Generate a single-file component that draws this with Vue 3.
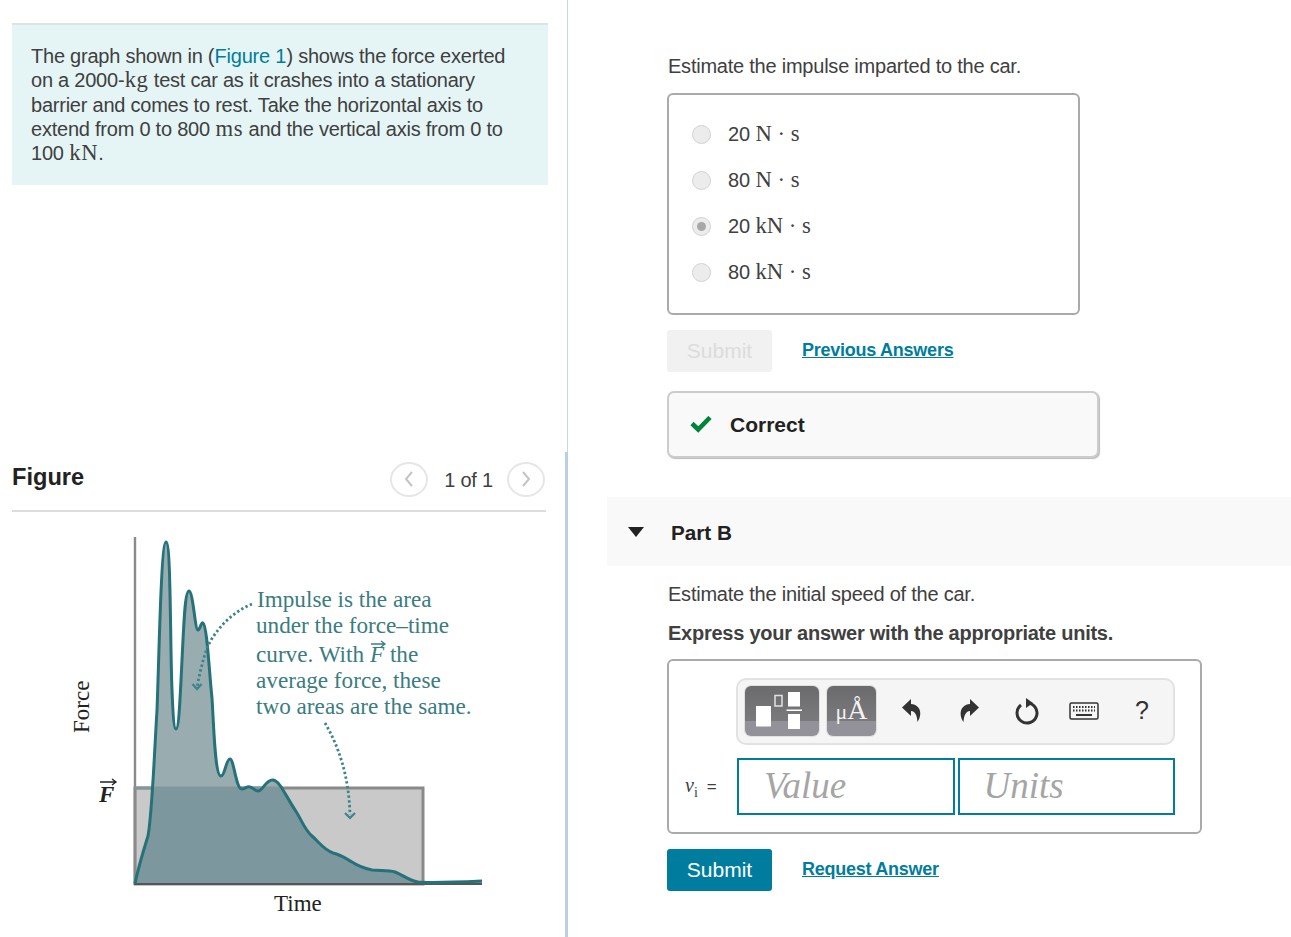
<script setup>
const options = [
  { num: '20', unit: 'N', on: false },
  { num: '80', unit: 'N', on: false },
  { num: '20', unit: 'kN', on: true },
  { num: '80', unit: 'kN', on: false }
]
const curve = 'M135 884 C138 868 143 852 148 836 C152 815 154 760 157 710 C159 660 161 542 166 542 C171 542 170 640 172 690 C173 715 174 729 176 729 C179 729 180 700 182 660 C184 620 185 591 189 591 C193 591 195 630 198 630 C200 630 201 622 203 623 C207 625 209 670 212 698 C214 730 215 776 221 776 C225 776 226 759 230 759 C234 759 236 790 242 789 C245 789 247 786 250 787 C254 788 255 791 258 791 C263 791 266 779 273 780 C280 781 285 795 297 813 C303 823 305 830 312 836 C320 843 323 849 333 853 C341 855 345 858 352 862 C358 866 363 868 372 870 C380 871 388 870 395 872 C403 875 408 880 418 882 C430 883 460 882 482 881'
const curveFill = curve + ' L482 884 Z'
</script>

<template>
  <div class="page">
    <div class="left">
      <section class="intro">
        <div class="problem">
          The graph shown in (<a class="fig-link">Figure 1</a>) shows the force exerted
          on a 2000-<span class="m">kg</span> test car as it crashes into a stationary
          barrier and comes to rest. Take the horizontal axis to
          extend from 0 to 800 <span class="m">ms</span> and the vertical axis from 0 to
          100 <span class="m">kN</span>.
        </div>
      </section>
      <section class="figure">
        <div class="fig-head">
          <h2>Figure</h2>
          <div class="pager">
            <span class="circle">
              <svg width="12" height="20" viewBox="0 0 12 20"><path d="M9 3 3 10l6 7" fill="none" stroke="#c4c4c4" stroke-width="2"/></svg>
            </span>
            <span class="count">1 of 1</span>
            <span class="circle">
              <svg width="12" height="20" viewBox="0 0 12 20"><path d="M3 3l6 7-6 7" fill="none" stroke="#c4c4c4" stroke-width="2"/></svg>
            </span>
          </div>
        </div>
        <svg class="chart" width="562" height="425" viewBox="0 512 562 425">
          <defs>
            <filter id="soft" x="-5%" y="-5%" width="110%" height="110%"><feGaussianBlur stdDeviation="0.45"/></filter>
            <clipPath id="inRect"><rect x="135" y="788" width="288" height="96"/></clipPath>
          </defs>
          <g filter="url(#soft)">
            <rect x="135" y="788" width="288" height="96" fill="#c9c9c9" stroke="#8a8a8a" stroke-width="3"/>
            <path :d="curveFill" fill="#99acb0"/>
            <path :d="curveFill" fill="#7b979e" clip-path="url(#inRect)"/>
            <line x1="135" y1="537" x2="135" y2="884" stroke="#8a8a8a" stroke-width="2.4"/>
            <line x1="135" y1="788" x2="283" y2="788" stroke="#83979b" stroke-width="3"/>
            <line x1="134" y1="884" x2="482" y2="884" stroke="#555" stroke-width="2"/>
            <path :d="curve" fill="none" stroke="#26727a" stroke-width="3"/>
            <path d="M252 604 C232 612 215 630 207 648 C203 660 199 675 197 688" fill="none" stroke="#3d8488" stroke-width="2.8" stroke-dasharray="2.4 2.4"/>
            <path d="M192.500 684l4.500 5 4.500-5" fill="none" stroke="#3d8488" stroke-width="2.2"/>
            <path d="M325 723 C338 745 349 775 350 815" fill="none" stroke="#3d8488" stroke-width="2.8" stroke-dasharray="2.4 2.4"/>
            <path d="M345 813l5 5 5-5" fill="none" stroke="#3d8488" stroke-width="2.2"/>
          </g>
          <g class="note">
            <text x="257" y="607">Impulse is the area</text>
            <text x="256" y="633">under the force–time</text>
            <text x="256" y="662">curve. With <tspan font-style="italic">F</tspan> the</text>
            <text x="256" y="688">average force, these</text>
            <text x="256" y="714">two areas are the same.</text>
          </g>
          <path d="M371 644 H385 M381 641l4 3-4 3" fill="none" stroke="#3d7f83" stroke-width="1.4"/>
          <text class="axis" transform="translate(89 733) rotate(-90)">Force</text>
          <text class="axis vec" x="99" y="802">F</text>
          <path d="M100 782 H116 M112 779l4 3-4 3" fill="none" stroke="#222" stroke-width="1.3"/>
          <text class="axis" x="274" y="911">Time</text>
        </svg>
      </section>
    </div>

    <main class="right">
      <div class="part-a">
        <p class="q first">Estimate the impulse imparted to the car.</p>
        <div class="choices">
          <label v-for="o in options" :key="o.num + o.unit" class="choice">
            <span class="radio" :class="{ on: o.on }"></span>
            <span class="opt">{{ o.num }} <span class="m">{{ o.unit }} · s</span></span>
          </label>
        </div>
        <div class="actions prev">
          <button class="btn off">Submit</button>
          <a class="link">Previous Answers</a>
        </div>
        <div class="correct">
          <svg width="22" height="18" viewBox="0 0 22 18"><path d="M2 7.500 8.200 13.500 20 1.500" fill="none" stroke="#00843c" stroke-width="4.6"/></svg>
          <span>Correct</span>
        </div>
      </div>

      <div class="part-head">
        <span class="tri"></span>
        <span class="part-title">Part B</span>
      </div>

      <div class="part-b">
        <p class="q">Estimate the initial speed of the car.</p>
        <p class="express">Express your answer with the appropriate units.</p>
        <div class="answer">
          <div class="toolbar">
            <div class="tool wide">
              <svg width="74" height="50" viewBox="0 0 74 50">
                <rect x="11" y="20" width="15" height="20.500" fill="#fff"/>
                <rect x="30" y="9.500" width="7" height="10.500" fill="none" stroke="#e2e2e2" stroke-width="1.500"/>
                <rect x="43" y="6" width="12" height="14.500" fill="#fff"/>
                <rect x="41.500" y="23.500" width="15.500" height="1.500" fill="#fff"/>
                <rect x="43" y="28" width="12" height="15" fill="#fff"/>
              </svg>
            </div>
            <div class="tool narrow"><span class="mu"><span class="mu-small">μ</span>Å</span></div>
            <div class="icons">
              <span class="ic"><svg width="22" height="26" viewBox="0 0 22 26"><path d="M10 1 1 9.500 10 18v-5c4 0 6 4 6.500 11 4.500-6 4.500-17-6.500-18Z" fill="#333"/></svg></span>
              <span class="ic"><svg width="22" height="26" viewBox="0 0 22 26"><path d="M12 1l9 8.500L12 18v-5c-4 0-6 4-6.500 11C1 18 1 7 12 6Z" fill="#333"/></svg></span>
              <span class="ic"><svg width="26" height="28" viewBox="0 0 26 28"><path d="M7 8A10 10 0 1 0 13 6" fill="none" stroke="#333" stroke-width="3"/><path d="M12 1l7 5-7 5Z" fill="#333"/></svg></span>
              <span class="ic"><svg width="30" height="18" viewBox="0 0 30 18"><rect x="1" y="1" width="28" height="16" rx="1.500" fill="#f5f5f5" stroke="#333" stroke-width="1.500"/><path d="M4 5h22M4 8.500h22" stroke="#333" stroke-width="2" stroke-dasharray="1.500 1.500"/><path d="M7 13h16" stroke="#333" stroke-width="2"/></svg></span>
              <span class="ic help">?</span>
            </div>
          </div>
          <div class="inputs">
            <span class="label"><i>v</i><sub>i</sub><span class="eq">=</span></span>
            <div class="field">Value</div>
            <div class="field units">Units</div>
          </div>
        </div>
        <div class="actions">
          <button class="btn primary">Submit</button>
          <a class="link">Request Answer</a>
        </div>
      </div>
    </main>
  </div>
</template>

<style>
html, body { margin: 0; background: #fff; }
</style>

<style scoped>
.page {
  display: flex;
  width: 1291px;
  height: 937px;
  overflow: hidden;
  font-family: "Liberation Sans", Arial, sans-serif;
  font-size: 20px;
  letter-spacing: -0.23px;
  color: #404040;
  background: #fff;
}
.left { width: 568px; flex: none; display: flex; flex-direction: column; }
.intro {
  height: 452px;
  box-sizing: border-box;
  padding: 23px 19px 0 12px;
  border-right: 1px solid #c9d6e6;
}
.problem {
  height: 162px;
  box-sizing: border-box;
  padding: 19px 19px 0;
  border-top: 2px solid #dfe3e4;
  background: #e5f5f6;
  line-height: 24.3px;
}
.fig-link { color: #007d9e; margin: 0 0.3px; }
.m { font-family: "Liberation Serif", serif; font-size: 22.700px; line-height: 1; letter-spacing: 0; margin-left: 0.3px; }
.problem .m { letter-spacing: 0.6px; }
.figure { flex: 1; border-right: 3px solid #bccfe1; }
.fig-head {
  display: flex;
  align-items: center;
  justify-content: space-between;
  box-sizing: border-box;
  width: 534px;
  height: 60px;
  margin-left: 12px;
  padding-bottom: 6px;
  border-bottom: 2px solid #ddd;
}
h2 { margin: -2px 0 0; font-size: 23.600px; font-weight: 700; letter-spacing: 0; color: #222; }
.pager { display: flex; align-items: center; margin: 2px 1px 0 0; }
.circle {
  width: 38px;
  height: 35px;
  box-sizing: border-box;
  display: flex;
  align-items: center;
  justify-content: center;
  border: 2px solid #e6e6e6;
  border-radius: 50%;
}
.count { width: 79px; box-sizing: border-box; text-align: center; padding: 3px 0 0 2px; }
.chart { display: block; }
.note text { font-family: "Liberation Serif", serif; font-size: 23.200px; letter-spacing: 0; fill: #3a7c80; }
.axis { font-family: "Liberation Serif", serif; font-size: 23px; letter-spacing: 0; fill: #222; }
.vec { font-style: italic; font-weight: 700; }

.right { flex: 1; min-width: 0; }
.part-a, .part-b { padding-left: 99px; }
.q { margin: 0; height: 24px; line-height: 24px; padding-left: 1px; }
.q.first { padding-top: 54px; }
.choices {
  box-sizing: border-box;
  width: 413px;
  height: 222px;
  margin-top: 15px;
  padding-top: 16px;
  border: 2px solid #aaa;
  border-radius: 6px;
}
.choice { display: flex; align-items: center; height: 46px; padding-left: 23px; }
.radio {
  box-sizing: border-box;
  flex: none;
  width: 19px;
  height: 19px;
  display: flex;
  align-items: center;
  justify-content: center;
  margin-right: 17px;
  border: 1px solid #d2d2d2;
  border-radius: 50%;
  background: #ececec;
}
.radio.on::after { content: ""; width: 9px; height: 9px; border-radius: 50%; background: #a8a8a8; }
.actions { display: flex; align-items: center; gap: 30px; }
.actions.prev { margin-top: 15px; }
.btn {
  width: 105px;
  height: 42px;
  border: 0;
  border-radius: 3px;
  font: 21px "Liberation Sans", Arial, sans-serif;
  padding: 0;
}
.btn.off { background: #f1f1f1; color: #dcdcdc; }
.btn.primary { background: #007d9e; color: #fff; }
.link { font-size: 18px; font-weight: 700; letter-spacing: -0.25px; color: #007d9e; text-decoration: underline; margin-bottom: 2px; }
.correct {
  box-sizing: border-box;
  display: flex;
  align-items: center;
  gap: 18px;
  width: 432px;
  height: 67px;
  margin-top: 19px;
  padding-left: 21px;
  border: 2px solid #ccc;
  border-radius: 7px;
  background: #f9f9f9;
  box-shadow: 1px 1px 1px #bbb;
  font-size: 21px;
  font-weight: 700;
  letter-spacing: 0;
  color: #222;
}
.part-head {
  display: flex;
  align-items: center;
  height: 69px;
  margin: 39px 0 0 39px;
  padding-left: 21px;
  box-sizing: border-box;
  background: #f9f9f9;
  font-size: 20.700px;
  font-weight: 700;
  letter-spacing: 0;
  color: #222;
}
.part-title { padding-top: 3px; }
.tri {
  width: 0;
  height: 0;
  margin-right: 27px;
  border: solid transparent;
  border-width: 10px 8px 0;
  border-top-color: #222;
}
.part-b .q { margin-top: 16px; }
.express { margin: 15px 0 0; padding-left: 1px; height: 24px; line-height: 24px; font-weight: 700; letter-spacing: -0.25px; }
.answer {
  box-sizing: border-box;
  width: 535px;
  height: 175px;
  margin-top: 14px;
  padding: 17px 25px 0 0;
  border: 2px solid #aaa;
  border-radius: 6px;
}
.toolbar {
  box-sizing: border-box;
  display: flex;
  align-items: center;
  gap: 8px;
  width: 439px;
  height: 67px;
  margin-left: 67px;
  padding: 0 0 2px 7px;
  border: 2px solid #e2e2e2;
  border-radius: 10px;
  background: #f5f5f5;
}
.tool {
  height: 50px;
  border-radius: 6px;
  background: linear-gradient(#6b6b6e 0, #7a7a7c 70%, #939199 70%, #939199 100%);
  box-shadow: 0 0 0 1px #e0e0e0;
}
.tool.wide { width: 74px; }
.tool svg { display: block; }
.tool.narrow { width: 49px; display: flex; align-items: flex-end; justify-content: center; }
.mu { font-family: "Liberation Serif", serif; font-size: 28px; line-height: 36px; margin-bottom: 6px; letter-spacing: 0; color: #f2f2f2; }
.mu-small { font-size: 22px; }
.icons { display: grid; grid-template-columns: repeat(5, 57.500px); margin-left: -1px; }
.ic { display: flex; align-items: center; justify-content: center; }
.help { font-size: 25px; color: #333; }
.inputs { display: flex; align-items: center; margin-top: 13px; }
.label {
  width: 68px;
  box-sizing: border-box;
  padding: 2px 0 0 16px;
  font-family: "Liberation Serif", serif;
  font-size: 20px;
  letter-spacing: 0;
}
.label sub { font-size: 14px; font-style: normal; }
.eq { margin-left: 9px; font: 17px "Liberation Sans", Arial, sans-serif; }
.field {
  box-sizing: border-box;
  width: 219px;
  height: 57px;
  padding-left: 25px;
  border: 2px solid #007d9e;
  font: italic 37px/52px "Liberation Serif", serif;
  letter-spacing: 0;
  color: #a5a5a5;
}
.field.units { width: 217px; margin-left: 3px; padding-left: 23px; }
.part-b .actions { margin-top: 15px; }
</style>
